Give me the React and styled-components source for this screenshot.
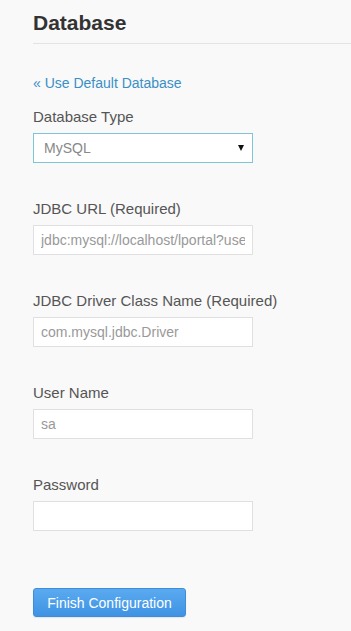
import React from "react";
import styled, { createGlobalStyle } from "styled-components";

const Global = createGlobalStyle`
  html, body { margin: 0; padding: 0; background: #f9f9f9; }
  body { font-family: "Liberation Sans", Arial, sans-serif; }
  * { box-sizing: border-box; }
`;

const Page = styled.div`
  padding: 11px 0 14px 33px;
  min-height: 631px;
  background: #f9f9f9;
`;

const Title = styled.h1`
  margin: 0;
  font-size: 21px;
  line-height: 24px;
  font-weight: bold;
  color: #333;
`;

const Rule = styled.div`
  height: 1px;
  background: #e3e3e3;
  margin-top: 8px;
`;

const BackLink = styled.a`
  display: block;
  margin-top: 29px;
  font-size: 14px;
  line-height: 20px;
  color: #3a8fc6;
  text-decoration: none;
  width: max-content;
`;

const Field = styled.div`
  display: flex;
  flex-direction: column;
  align-items: flex-start;
  margin-top: ${(p) => p.$gap}px;
`;

const Label = styled.label`
  font-size: 15px;
  line-height: 20px;
  color: #555;
  margin-bottom: 6px;
`;

const Input = styled.input`
  width: 220px;
  height: 30px;
  border: 1px solid #e0e0e0;
  background: #fff;
  padding: 0 7px;
  font-family: "Liberation Sans", Arial, sans-serif;
  font-size: 14px;
  color: #999;
  outline: none;
  border-radius: 0;
`;

const SelectBox = styled.div`
  width: 220px;
  height: 30px;
  border: 1px solid #7ec6d6;
  background: #fff;
  display: flex;
  align-items: center;
  padding: 0 10px;
  font-size: 14px;
  color: #888;
`;

const Arrow = styled.span`
  margin-left: auto;
  width: 0;
  height: 0;
  border-left: 3.5px solid transparent;
  border-right: 3.5px solid transparent;
  border-top: 6px solid #111;
  margin-right: -2px;
`;

const Button = styled.button`
  margin-top: 57px;
  width: 153px;
  height: 29px;
  border: 1px solid #3d8ddb;
  border-radius: 3px;
  background: linear-gradient(#5aaaf0, #3f93e3);
  color: #fff;
  font-family: "Liberation Sans", Arial, sans-serif;
  font-size: 14px;
  padding: 0;
  box-shadow: 0 1px 1px rgba(0,0,0,0.08);
`;

export default function App() {
  return (
    <>
      <Global />
      <Page>
        <Title>Database</Title>
        <Rule />
        <BackLink href="#">« Use Default Database</BackLink>
        <Field $gap={14}>
          <Label>Database Type</Label>
          <SelectBox>
            MySQL
            <Arrow />
          </SelectBox>
        </Field>
        <Field $gap={36}>
          <Label>JDBC URL (Required)</Label>
          <Input defaultValue="jdbc:mysql://localhost/lportal?useUnicode=true" />
        </Field>
        <Field $gap={36}>
          <Label>JDBC Driver Class Name (Required)</Label>
          <Input defaultValue="com.mysql.jdbc.Driver" />
        </Field>
        <Field $gap={36}>
          <Label>User Name</Label>
          <Input defaultValue="sa" />
        </Field>
        <Field $gap={36}>
          <Label>Password</Label>
          <Input type="password" defaultValue="" />
        </Field>
        <Button>Finish Configuration</Button>
      </Page>
    </>
  );
}
